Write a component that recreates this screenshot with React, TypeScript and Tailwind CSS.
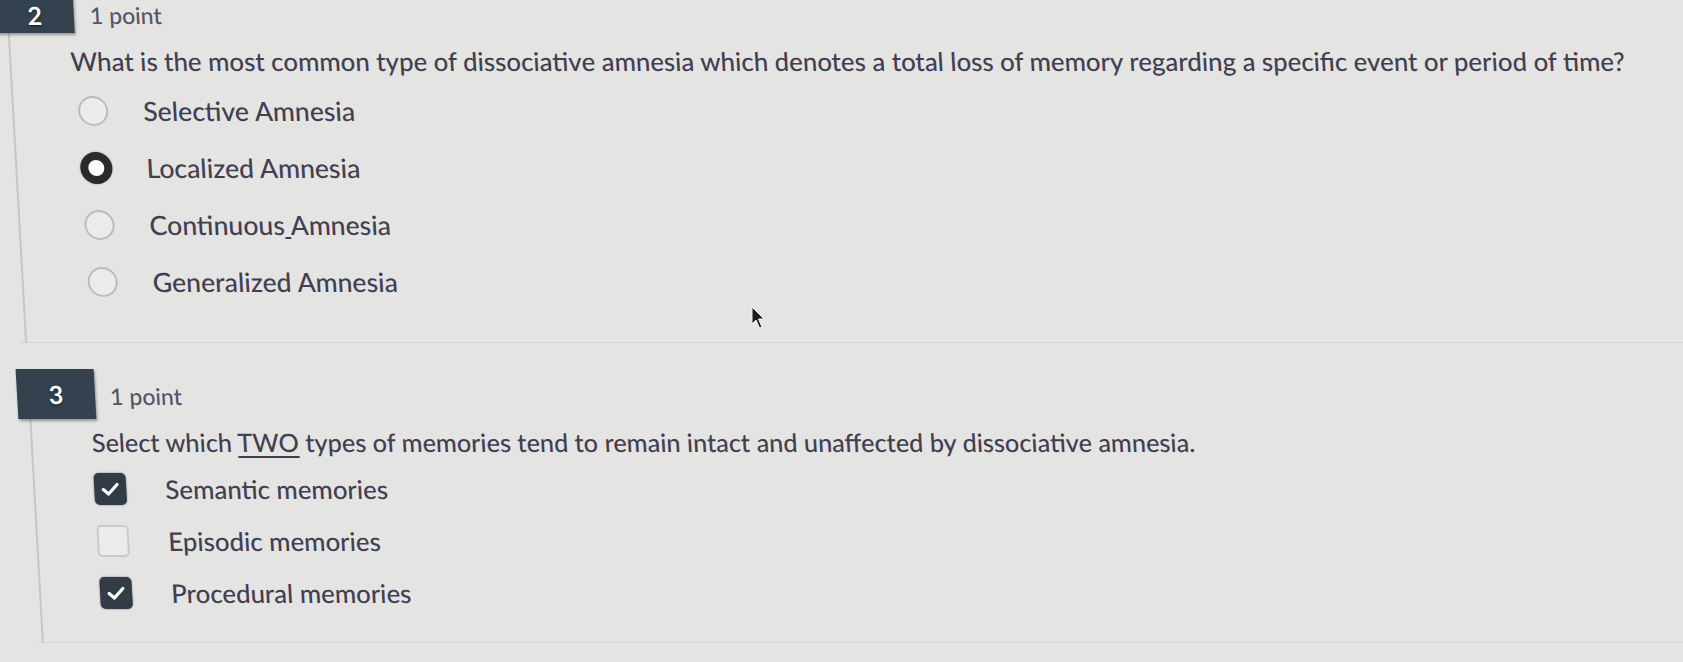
import React from 'react';

const radioOptions = [
  { label: 'Selective Amnesia', selected: false },
  { label: 'Localized Amnesia', selected: true },
  { label: 'Continuous Amnesia', selected: false },
  { label: 'Generalized Amnesia', selected: false },
];

const checkOptions = [
  { label: 'Semantic memories', checked: true },
  { label: 'Episodic memories', checked: false },
  { label: 'Procedural memories', checked: true },
];

const Badge: React.FC<{ n: number; top?: boolean }> = ({ n, top }) => (
  <div
    className={`flex h-[50px] w-[78px] shrink-0 items-center justify-center bg-[#33424e] shadow-[1px_2px_3px_rgba(0,0,0,0.35)] ${
      top ? 'pt-[14px]' : ''
    }`}
  >
    <span className="text-[25px] leading-[28px] font-bold text-white [text-shadow:0_1px_2px_rgba(0,0,0,0.6)]">{n}</span>
  </div>
);

const Radio: React.FC<{ selected: boolean }> = ({ selected }) =>
  selected ? (
    <div className="h-[32px] w-[32px] shrink-0 rounded-full border-[8px] border-[#2a2a2d] bg-white shadow-[0_0_2px_rgba(0,0,0,0.4)]" />
  ) : (
    <div className="m-[1px] h-[30px] w-[30px] shrink-0 rounded-full border-2 border-[#bcbcba] bg-[#ebebe9]" />
  );

const Checkbox: React.FC<{ checked: boolean }> = ({ checked }) =>
  checked ? (
    <div className="flex h-[32px] w-[32px] shrink-0 items-center justify-center rounded-[5px] bg-[#323c46] shadow-[0_0_2px_rgba(0,0,0,0.5)]">
      <svg width="20" height="16" viewBox="0 0 20 16">
        <polyline points="3,8.5 8,13 17,3.5" fill="none" stroke="#ffffff" strokeWidth="3.2" strokeLinecap="round" strokeLinejoin="round" />
      </svg>
    </div>
  ) : (
    <div className="h-[32px] w-[32px] shrink-0 rounded-[5px] border-2 border-[#cacac8] bg-[#ebebe9]" />
  );

export default function App() {
  return (
    <div className="relative h-[662px] w-full overflow-hidden bg-[#e4e4e2] font-['Lato','Open_Sans',sans-serif] font-medium text-[#433f52]">
      <div className="origin-top-left skew-x-[3.2deg]">
        {/* question 2 */}
        <section className="-mt-[17px] border-b border-[#d2d2d0]">
          <div className="-ml-[6px] flex items-start">
            <Badge n={2} top />
            <span className="mt-[20px] ml-[16px] text-[23px] leading-[24px] text-[#57546a]">1 point</span>
          </div>
          <div className="ml-[5px] border-l-2 border-[#c6c6c4] pb-[32px] pl-[59px]">
            <p className="pt-[13px] text-[25.8px] leading-[30px]">
              What is the most common type of dissociative amnesia which denotes a total loss of memory regarding a specific event or period of time?
            </p>
            <div className="mt-[6px]">
              {radioOptions.map((o) => (
                <div key={o.label} className="flex h-[57px] items-center">
                  <div className="ml-[4px]">
                    <Radio selected={o.selected} />
                  </div>
                  <span className="ml-[34px] text-[26.6px] leading-[30px]">
                    {o.label === 'Continuous Amnesia' ? (
                      <>
                        Continuous<span className="underline decoration-[#433f52]">&nbsp;</span>Amnesia
                      </>
                    ) : (
                      o.label
                    )}
                  </span>
                </div>
              ))}
            </div>
          </div>
        </section>

        {/* question 3 */}
        <section className="border-b border-[#d8d8d6]">
          <div className="-ml-[6px] flex items-start pt-[26px]">
            <Badge n={3} />
            <span className="mt-[15px] ml-[15px] text-[23px] leading-[24px] text-[#57546a]">1 point</span>
          </div>
          <div className="ml-[5px] border-l-2 border-[#c6c6c4] pb-[23px] pl-[59px]">
            <p className="pt-[8px] text-[25.3px] leading-[30px]">
              Select which <span className="underline decoration-2 underline-offset-4">TWO</span> types of memories tend to remain intact and unaffected by dissociative amnesia.
            </p>
            <div className="mt-[6px]">
              {checkOptions.map((o) => (
                <div key={o.label} className="flex h-[52px] items-center">
                  <Checkbox checked={o.checked} />
                  <span className="ml-[39px] text-[25.8px] leading-[30px]">{o.label}</span>
                </div>
              ))}
            </div>
          </div>
        </section>
      </div>

      {/* mouse pointer */}
      <svg className="absolute left-[751px] top-[306px]" width="16" height="24" viewBox="0 0 16 24">
        <path d="M1 1 L1 18 L5 14 L8.5 22 L11 21 L7.5 13 L13 13 Z" fill="#1d1a22" stroke="#f4f4f4" strokeWidth="1" />
      </svg>
    </div>
  );
}
